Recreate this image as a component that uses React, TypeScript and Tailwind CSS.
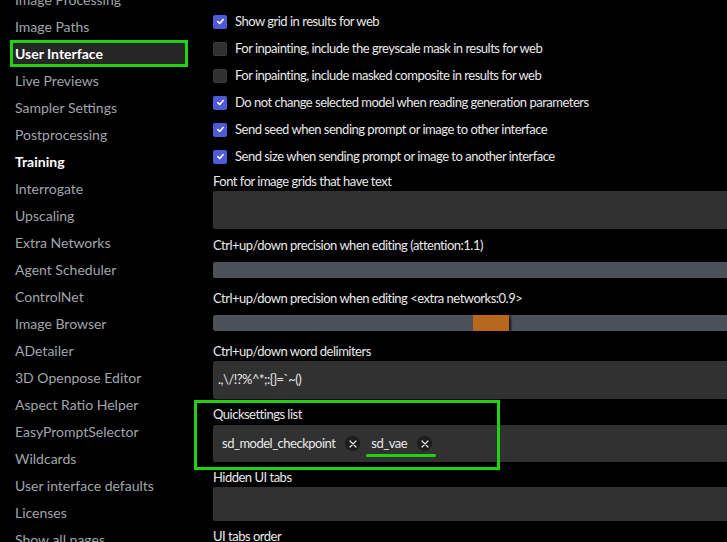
import React from 'react';

const navItems = [
    'Image Processing',
    'Image Paths',
    'User Interface',
    'Live Previews',
    'Sampler Settings',
    'Postprocessing',
    'Training',
    'Interrogate',
    'Upscaling',
    'Extra Networks',
    'Agent Scheduler',
    'ControlNet',
    'Image Browser',
    'ADetailer',
    '3D Openpose Editor',
    'Aspect Ratio Helper',
    'EasyPromptSelector',
    'Wildcards',
    'User interface defaults',
    'Licenses',
    'Show all pages',
];

const checks = [
    { label: 'Show grid in results for web', on: true },
    { label: 'For inpainting, include the greyscale mask in results for web', on: false },
    { label: 'For inpainting, include masked composite in results for web', on: false },
    { label: 'Do not change selected model when reading generation parameters', on: true },
    { label: 'Send seed when sending prompt or image to other interface', on: true },
    { label: 'Send size when sending prompt or image to another interface', on: true },
];

const Checkbox: React.FC<{ on: boolean }> = ({ on }) =>
    on ? (
        <span className="flex h-[14px] w-[14px] shrink-0 items-center justify-center rounded-[2px] bg-[#4f5bd6] shadow-[1px_1px_2px_rgba(0,0,0,0.6)]">
            <svg width="9" height="9" viewBox="0 0 10 10" fill="none">
                <path d="M2 5.2 4.1 7.2 8 2.8" stroke="white" strokeWidth="1.8" strokeLinecap="round" strokeLinejoin="round" />
            </svg>
        </span>
    ) : (
        <span className="h-[14px] w-[14px] shrink-0 rounded-[2px] border border-[#3a3a3a] bg-[#303030] shadow-[1px_1px_2px_rgba(0,0,0,0.6)]" />
    );

const Chip: React.FC<{ label: string; underline?: boolean }> = ({ label, underline }) => (
    <div className="relative flex items-center gap-[10px]">
        <span>{label}</span>
        <span className="flex h-[15px] w-[15px] items-center justify-center rounded-full bg-[#1c1c1c]">
            <svg width="8" height="8" viewBox="0 0 8 8">
                <path d="M1 1 7 7M7 1 1 7" stroke="#e5e5e5" strokeWidth="1.3" strokeLinecap="round" />
            </svg>
        </span>
        {underline && <span className="absolute left-[-5px] right-[-4px] top-[20px] h-[3px] rounded-full bg-[#22d10f]" />}
    </div>
);

export default function App() {
    return (
        <div
            className="flex h-[542px] w-[727px] items-start overflow-hidden bg-black"
            style={{ fontFamily: 'Lato, "Liberation Sans", sans-serif' }}
        >
            {/* settings nav */}
            <nav className="mt-[-14px] flex w-[200px] shrink-0 flex-col text-[14px]">
                {navItems.map((item) => {
                    if (item === 'User Interface') {
                        return (
                            <div
                                key={item}
                                className="ml-[10px] flex h-[27px] w-[178px] items-center border-[3px] border-[#22d10f] bg-[#262626] pl-[2px] font-bold text-white"
                            >
                                {item}
                            </div>
                        );
                    }
                    return (
                        <div
                            key={item}
                            className={
                                item === 'Training'
                                    ? 'flex h-[27px] items-center pl-[15px] font-bold text-white'
                                    : 'flex h-[27px] items-center pl-[15px] text-[#a1a5ab]'
                            }
                        >
                            {item}
                        </div>
                    );
                })}
            </nav>

            {/* settings panel */}
            <main className="ml-[13px] flex w-[540px] shrink-0 flex-col pt-[8px] text-[13px] tracking-[-0.5px] text-[#e9e9e9]">
                {checks.map((c) => (
                    <label key={c.label} className="flex h-[27px] items-center gap-[8px] whitespace-nowrap">
                        <Checkbox on={c.on} />
                        <span>{c.label}</span>
                    </label>
                ))}

                <div className="mt-[3px] flex h-[18px] items-center">Font for image grids that have text</div>
                <div className="h-[38px] rounded-[2px] bg-[#313131]" />

                <div className="mt-[8px] flex h-[18px] items-center">Ctrl+up/down precision when editing (attention:1.1)</div>
                <div className="mt-[7px] h-[16px] rounded-[2px] bg-[#4c5058]" />

                <div className="mt-[12px] flex h-[18px] items-center">Ctrl+up/down precision when editing &lt;extra networks:0.9&gt;</div>
                <div className="mt-[7px] flex h-[16px] rounded-[2px] bg-[#4c5058] pl-[260px]">
                    <div className="h-[16px] w-[36px] bg-[#b8681d] shadow-[2px_1px_2px_rgba(0,0,0,0.7)]" />
                </div>

                <div className="mt-[12px] flex h-[18px] items-center">Ctrl+up/down word delimiters</div>
                <div className="flex h-[38px] items-center rounded-[2px] bg-[#313131] pl-[5px] text-[13px]">.,\/!?%^*;:{'{}'}=`~()</div>

                <div className="relative mt-[7px]">
                    <div className="flex h-[18px] items-center">Quicksettings list</div>
                    <div className="mt-[1px] flex h-[37px] items-center gap-[11px] rounded-[2px] bg-[#313131] pl-[9px]">
                        <Chip label="sd_model_checkpoint" />
                        <Chip label="sd_vae" underline />
                    </div>
                    <div className="absolute left-[-19px] top-[-6px] h-[70px] w-[306px] border-[3px] border-[#22d10f]" />
                </div>

                <div className="mt-[7px] flex h-[18px] items-center">Hidden UI tabs</div>
                <div className="h-[34px] rounded-[2px] bg-[#313131]" />

                <div className="mt-[7px] flex h-[18px] items-center">UI tabs order</div>
            </main>
        </div>
    );
}
